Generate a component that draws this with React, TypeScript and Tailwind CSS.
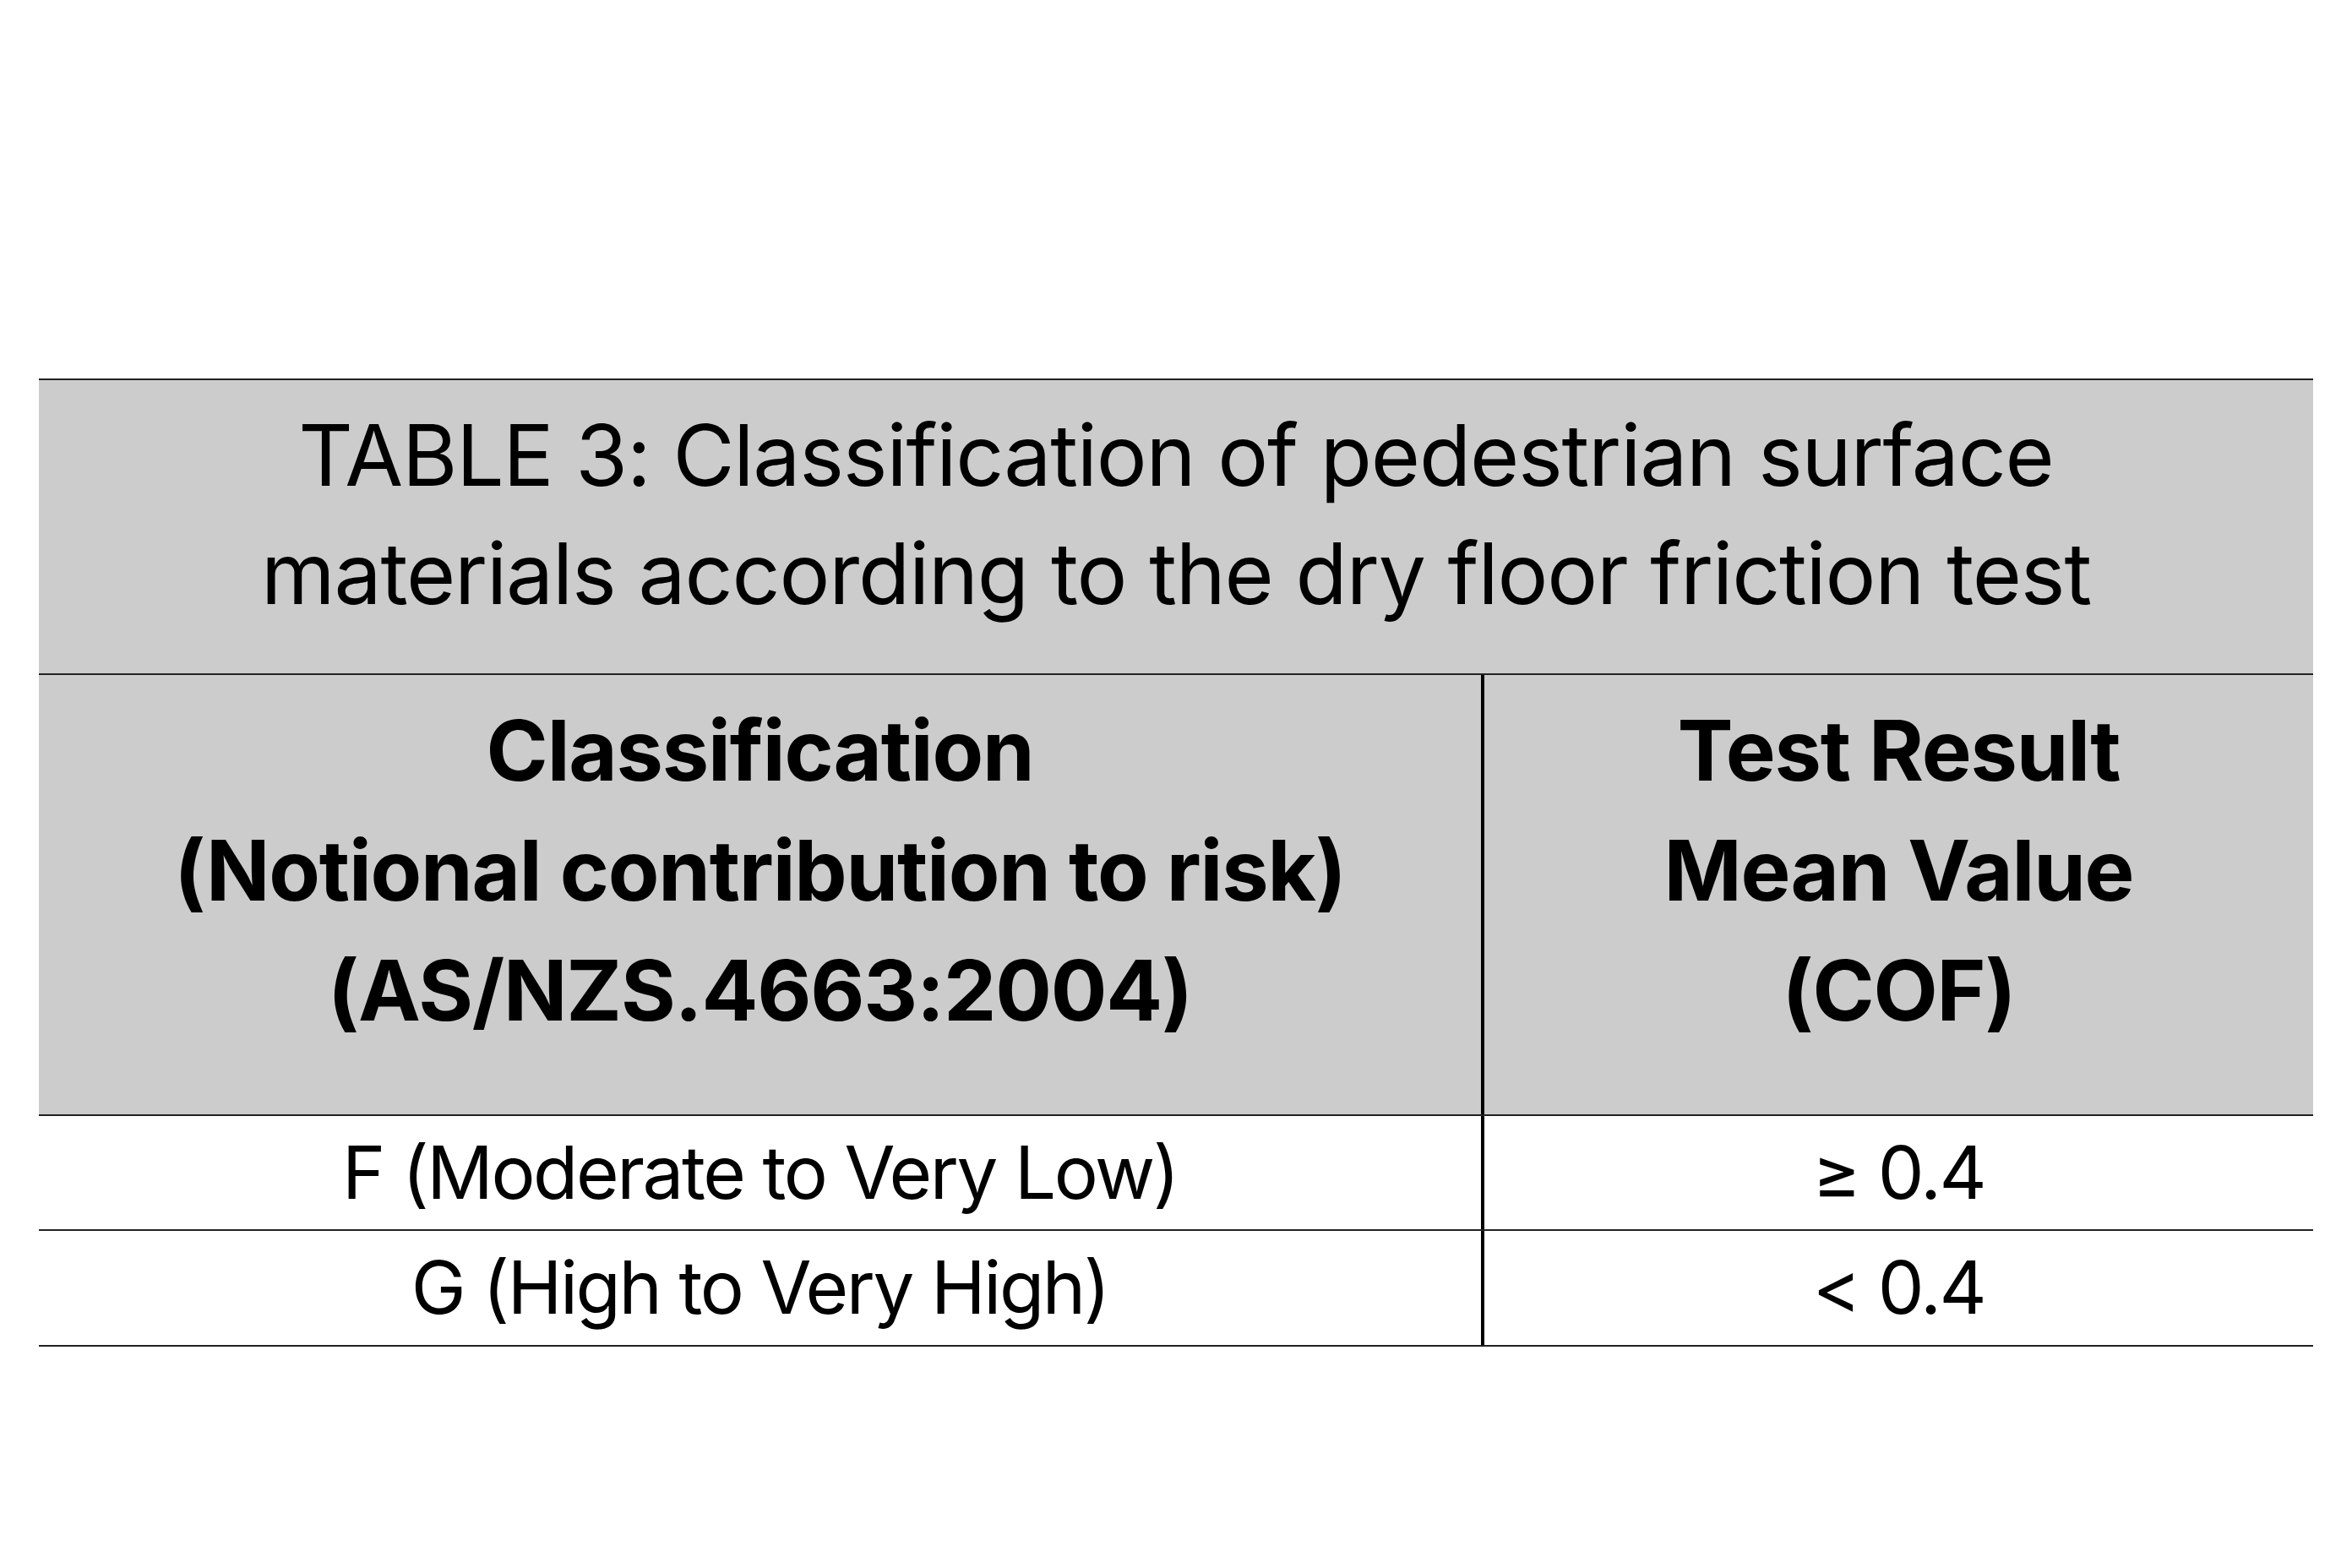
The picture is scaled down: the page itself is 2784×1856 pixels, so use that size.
export default function App() {
  const rows = [
    { label: "F (Moderate to Very Low)", value: "≥ 0.4", h: "h-[136px]" },
    { label: "G (High to Very High)", value: "< 0.4", h: "h-[137px]" },
  ];

  return (
    <div className="w-[2784px] h-[1856px] bg-white pt-[448px] pl-[46px] text-black font-[family-name:Inter,sans-serif]">
      <div className="w-[2692px]">
        {/* title */}
        <div className="h-[351px] border-y-2 border-[#222] bg-[#cccccc] pt-[19px] text-center text-[100px] leading-[140px] tracking-[-0.012em]">
          <div>TABLE 3: Classification of pedestrian surface</div>
          <div>materials according to the dry floor friction test</div>
        </div>

        {/* column heads */}
        <div className="flex h-[522px] border-b-2 border-[#222] bg-[#cccccc] font-bold text-[99px] leading-[142px] tracking-[-0.012em] text-center">
          <div className="w-[1711px] border-r-4 border-black pt-[18px]">
            <div>Classification</div>
            <div>(Notional contribution to risk)</div>
            <div>(AS/NZS.4663:2004)</div>
          </div>
          <div className="flex-1 pt-[18px]">
            <div>Test Result</div>
            <div>Mean Value</div>
            <div>(COF)</div>
          </div>
        </div>

        {/* rows */}
        {rows.map((row) => (
          <div
            key={row.label}
            className={`flex ${row.h} border-b-2 border-[#222] text-[87px] tracking-[-0.028em] text-center`}
          >
            <div className="w-[1711px] border-r-4 border-black flex items-center justify-center">
              {row.label}
            </div>
            <div className="flex-1 flex items-center justify-center">{row.value}</div>
          </div>
        ))}
      </div>
    </div>
  );
}
